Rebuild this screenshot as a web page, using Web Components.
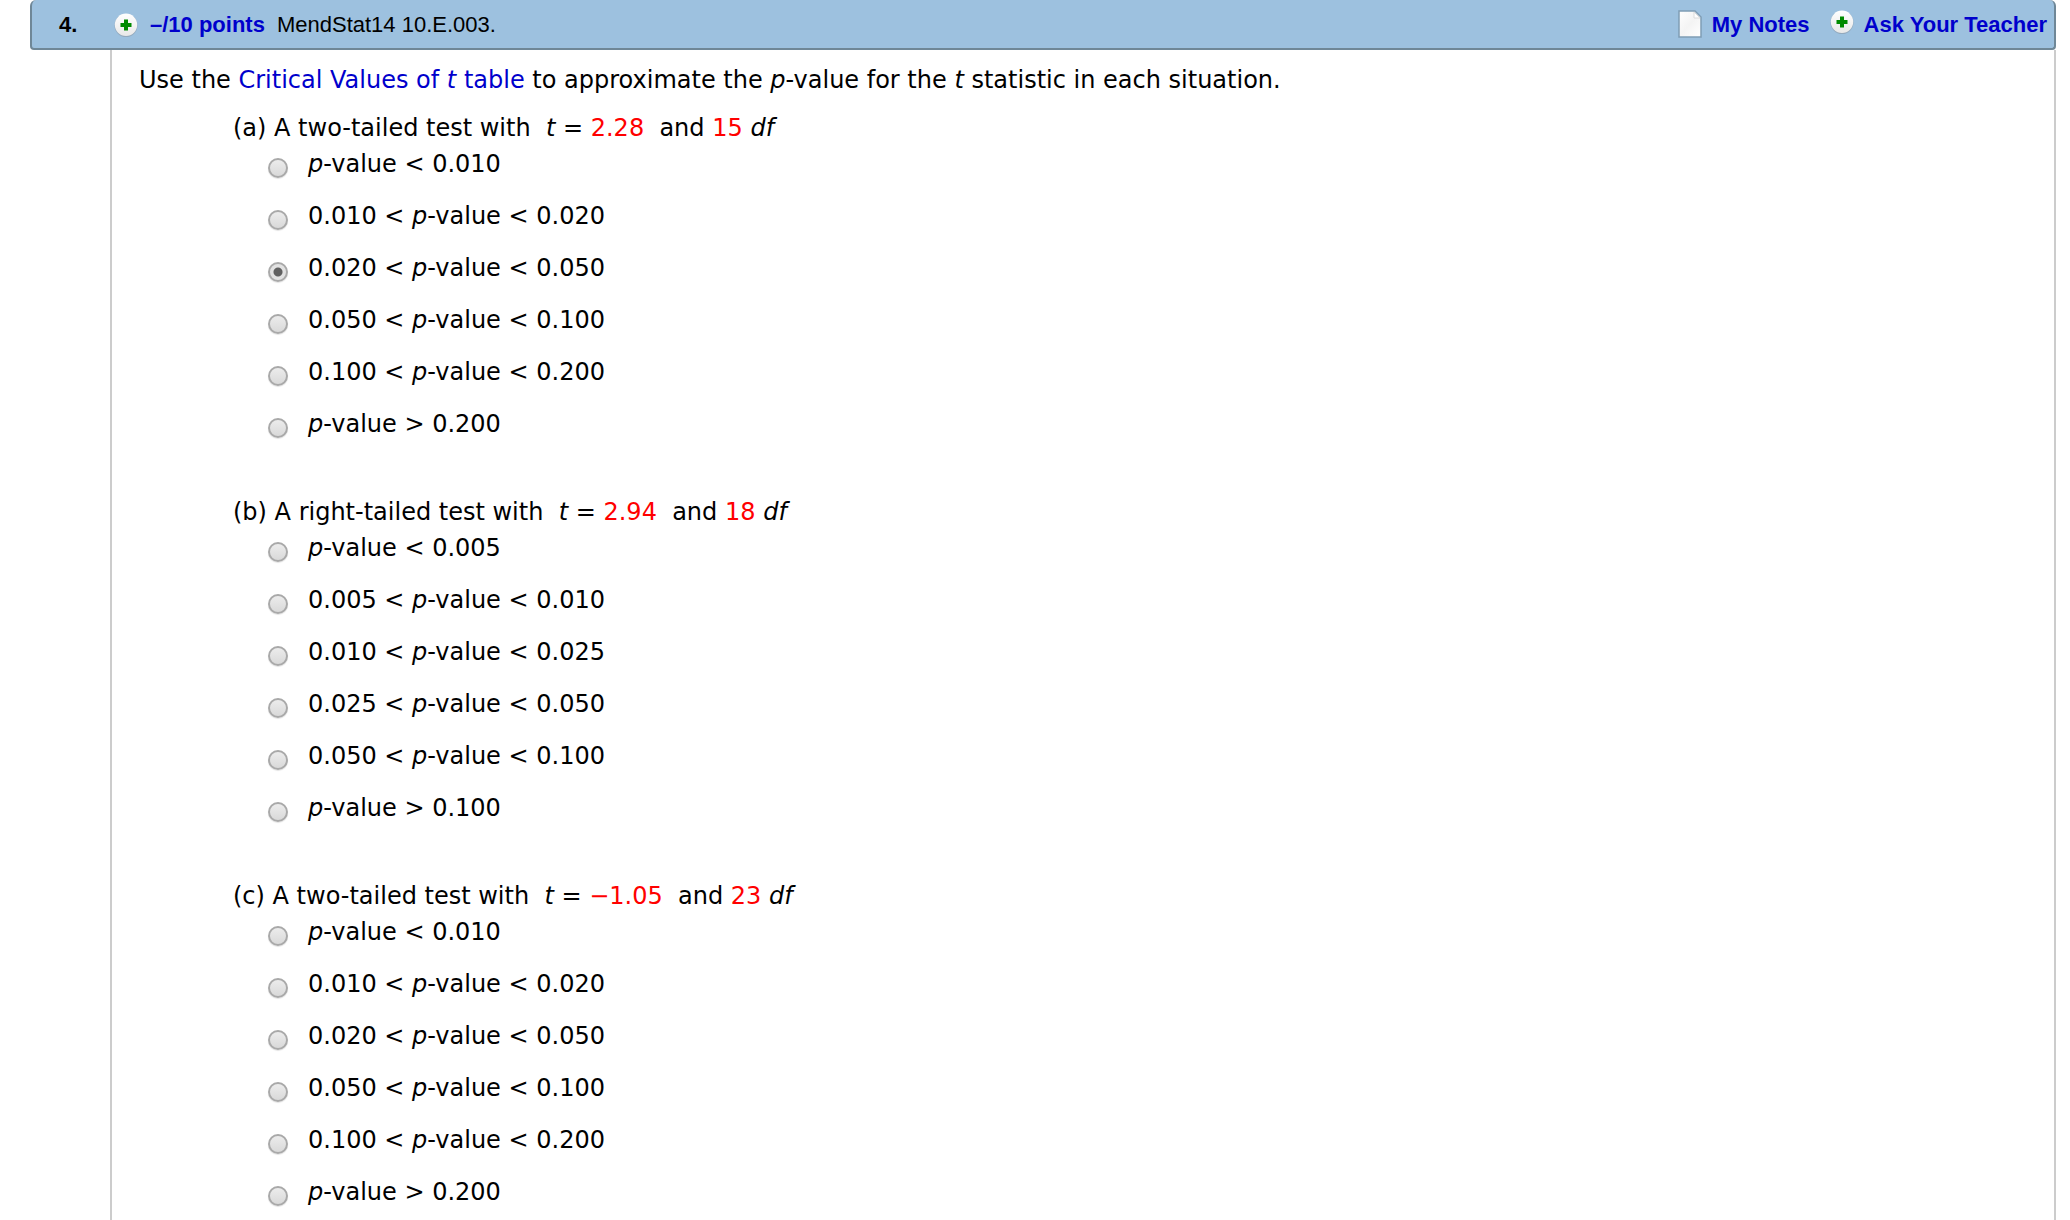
<!DOCTYPE html>
<html lang="en">
<head>
<meta charset="utf-8">
<meta name="viewport" content="width=device-width, initial-scale=1">
<title>MendStat14 10.E.003.</title>
<style>
  body {
    margin: 0;
    background: #fff;
    color: #000;
    font-family: Verdana, "DejaVu Sans", sans-serif;
    font-size: 24px;
    line-height: 36px;
  }
  .num {
    color: #f00;
  }
</style>
</head>
<body>
<question-box>
  <question-header slot="header" number="4." points="–/10 points" source="MendStat14 10.E.003."></question-header>
  <question-intro></question-intro>
  <question-part name="a" checked="2" choices="p-value &lt; 0.010|0.010 &lt; p-value &lt; 0.020|0.020 &lt; p-value &lt; 0.050|0.050 &lt; p-value &lt; 0.100|0.100 &lt; p-value &lt; 0.200|p-value &gt; 0.200">(a) A two-tailed test with &nbsp;<i>t</i> = <span class="num">2.28</span>&nbsp; and <span class="num">15</span> <i>df</i></question-part>
  <question-part name="b" choices="p-value &lt; 0.005|0.005 &lt; p-value &lt; 0.010|0.010 &lt; p-value &lt; 0.025|0.025 &lt; p-value &lt; 0.050|0.050 &lt; p-value &lt; 0.100|p-value &gt; 0.100">(b) A right-tailed test with &nbsp;<i>t</i> = <span class="num">2.94</span>&nbsp; and <span class="num">18</span> <i>df</i></question-part>
  <question-part name="c" choices="p-value &lt; 0.010|0.010 &lt; p-value &lt; 0.020|0.020 &lt; p-value &lt; 0.050|0.050 &lt; p-value &lt; 0.100|0.100 &lt; p-value &lt; 0.200|p-value &gt; 0.200">(c) A two-tailed test with &nbsp;<i>t</i> = <span class="num">−1.05</span>&nbsp; and <span class="num">23</span> <i>df</i></question-part>
</question-box>

<script>
class PlusIcon extends HTMLElement {
  connectedCallback() {
    this.attachShadow({ mode: "open" });
    this.shadowRoot.innerHTML = `
      <style>
        :host {
          display: block;
          width: 24px;
          height: 24px;
        }
        svg {
          display: block;
        }
      </style>
      <svg width="24" height="24" viewBox="0 0 24 24" aria-hidden="true">
        <defs>
          <linearGradient id="g" x1="0" y1="0" x2="0" y2="1">
            <stop offset="0" stop-color="#fff"/>
            <stop offset="1" stop-color="#e8e8e8"/>
          </linearGradient>
        </defs>
        <circle cx="12" cy="12.5" r="11.5" fill="#8b9aa6" opacity=".6"/>
        <circle cx="12" cy="11.8" r="11.2" fill="url(#g)"/>
        <path d="M10 6.5h4v3.5h3.5v4h-3.500v3.500h-4v-3.500h-3.500v-4h3.500z" fill="#008a00"/>
      </svg>
    `;
  }
}

class NoteIcon extends HTMLElement {
  connectedCallback() {
    this.attachShadow({ mode: "open" });
    this.shadowRoot.innerHTML = `
      <style>
        :host {
          display: block;
          width: 24px;
          height: 28px;
        }
        svg {
          display: block;
        }
      </style>
      <svg width="24" height="28" viewBox="0 0 24 28" aria-hidden="true">
        <defs>
          <linearGradient id="paper" x1="0" y1="0" x2="1" y2="1">
            <stop offset="0" stop-color="#fff"/>
            <stop offset=".5" stop-color="#f4f4f4"/>
            <stop offset="1" stop-color="#fff"/>
          </linearGradient>
        </defs>
        <path d="M1 1h16l6 6v20H1z" fill="url(#paper)" stroke="#7f9db5" stroke-width="1.5"/>
        <path d="M16 2v6h6z" fill="#fff" stroke="#dcdcdc"/>
      </svg>
    `;
  }
}

class QuestionHeader extends HTMLElement {
  connectedCallback() {
    this.attachShadow({ mode: "open" });
    this.shadowRoot.innerHTML = `
      <style>
        :host {
          display: block;
          font-family: Arial, "Liberation Sans", sans-serif;
          font-size: 22px;
          line-height: 46px;
        }
        header {
          display: flex;
          justify-content: space-between;
          padding: 2px 7px 0 27px;
          background: #9dc1df;
          border: solid #6f8797;
          border-width: 0 2px 2px;
          border-radius: 6px 6px 4px 4px;
        }
        .group {
          display: flex;
          align-items: center;
        }
        .number {
          width: 55px;
          font-weight: bold;
        }
        a {
          color: #00c;
          font-weight: bold;
          text-decoration: none;
        }
        .points {
          margin: 0 12px;
        }
        .tool {
          display: flex;
          align-items: center;
          gap: 10px;
          margin-left: 20px;
        }
        .tool plus-icon {
          padding-bottom: 6px;
        }
        .tool note-icon {
          padding-bottom: 2px;
        }
      </style>
      <header>
        <div class="group">
          <span class="number">${this.getAttribute("number")}</span>
          <plus-icon></plus-icon>
          <a class="points" href="#points">${this.getAttribute("points")}</a>
          <span>${this.getAttribute("source")}</span>
        </div>
        <div class="group">
          <a class="tool" href="#notes"><note-icon></note-icon>My Notes</a>
          <a class="tool" href="#ask"><plus-icon></plus-icon>Ask Your Teacher</a>
        </div>
      </header>
    `;
  }
}

class QuestionIntro extends HTMLElement {
  connectedCallback() {
    this.attachShadow({ mode: "open" });
    this.shadowRoot.innerHTML = `
      <style>
        :host {
          display: block;
          margin-bottom: 12px;
        }
        p {
          margin: 0;
        }
        a {
          color: #00c;
          text-decoration: none;
        }
      </style>
      <p>Use the <a href="#t-table">Critical Values of <i>t</i> table</a> to approximate the <i>p</i>-value for the <i>t</i> statistic in each situation.</p>
    `;
  }
}

class QuestionPart extends HTMLElement {
  connectedCallback() {
    this.attachShadow({ mode: "open" });
    this.shadowRoot.innerHTML = `
      <style>
        :host {
          display: block;
          margin: 0 0 36px 94px;
        }
        fieldset {
          margin: 0;
          padding: 0;
          border: 0;
        }
        legend {
          padding: 0;
        }
        .choice {
          display: flex;
          align-items: center;
          gap: 20px;
          padding: 0 0 16px 35px;
        }
        input {
          appearance: none;
          flex: none;
          box-sizing: border-box;
          width: 20px;
          height: 20px;
          margin: 8px 0 0;
          border: 2px solid #a9a9a9;
          border-radius: 50%;
          background: linear-gradient(#ececec, #d9d9d9);
          box-shadow: 0 1px 1px #e2e2e2;
        }
        input:checked {
          background: radial-gradient(circle, #606060 4px, #e2e2e2 5px);
        }
      </style>
      <fieldset>
        <legend><slot></slot></legend>
      </fieldset>
    `;

    const name = this.getAttribute("name");
    const checked = this.getAttribute("checked");
    const fieldset = this.shadowRoot.querySelector("fieldset");

    this.getAttribute("choices").split("|").forEach((choice, i) => {
      const row = document.createElement("div");
      row.className = "choice";

      const input = document.createElement("input");
      input.type = "radio";
      input.name = name;
      input.id = name + i;
      input.checked = String(i) === checked;

      // The p of "p-value" is set in italics
      const label = document.createElement("label");
      label.htmlFor = input.id;
      const [before, after] = choice.split("p-value");
      const p = document.createElement("i");
      p.textContent = "p";
      label.append(before, p, "-value" + after);

      row.append(input, label);
      fieldset.append(row);
    });
  }
}

class QuestionBox extends HTMLElement {
  connectedCallback() {
    this.attachShadow({ mode: "open" });
    this.shadowRoot.innerHTML = `
      <style>
        :host {
          display: block;
          margin: 0 14px 0 30px;
        }
        main {
          margin-left: 80px;
          padding: 12px 27px 0;
          border: solid #ccc;
          border-width: 0 2px;
        }
      </style>
      <slot name="header"></slot>
      <main><slot></slot></main>
    `;
  }
}

customElements.define("plus-icon", PlusIcon);
customElements.define("note-icon", NoteIcon);
customElements.define("question-header", QuestionHeader);
customElements.define("question-intro", QuestionIntro);
customElements.define("question-part", QuestionPart);
customElements.define("question-box", QuestionBox);
</script>
</body>
</html>
